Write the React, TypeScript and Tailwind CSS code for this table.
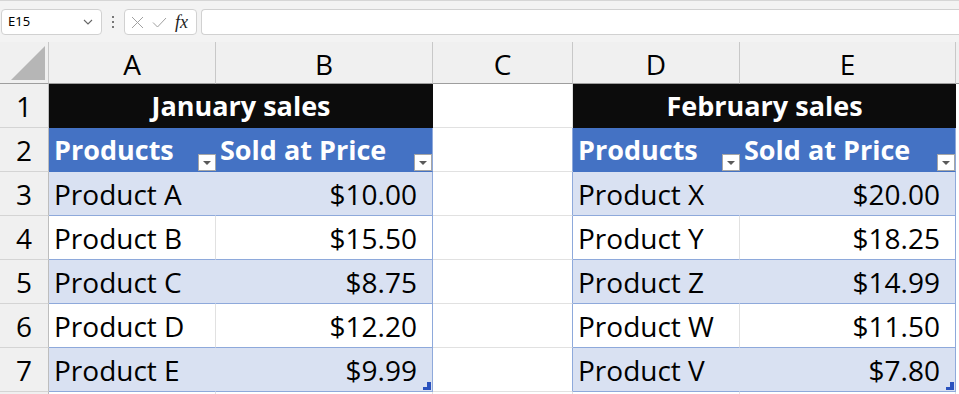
import React from 'react';

const font = { fontFamily: '"Open Sans", "Liberation Sans", Arial, sans-serif' };

type Row = { name: string; price: string };

const jan: Row[] = [
  { name: 'Product A', price: '$10.00' },
  { name: 'Product B', price: '$15.50' },
  { name: 'Product C', price: '$8.75' },
  { name: 'Product D', price: '$12.20' },
  { name: 'Product E', price: '$9.99' },
];

const feb: Row[] = [
  { name: 'Product X', price: '$20.00' },
  { name: 'Product Y', price: '$18.25' },
  { name: 'Product Z', price: '$14.99' },
  { name: 'Product W', price: '$11.50' },
  { name: 'Product V', price: '$7.80' },
];

const FilterButton = () => (
  <div className="absolute right-0 bottom-0 w-[18px] h-[17px] bg-white border border-[#a6a6a6] flex items-center justify-center pt-[2px]">
    <svg width="8" height="5" viewBox="0 0 8 5">
      <polygon points="0,0 8,0 4,4" fill="#5a5a5a" />
    </svg>
  </div>
);

const ResizeHandle = () => (
  <svg className="absolute right-[1px] bottom-[1px]" width="8" height="8" viewBox="0 0 8 8">
    <polygon points="8,0 8,8 0,8 0,5 4,5 4,0" fill="#2a52be" />
  </svg>
);

const RowHead = ({ n }: { n?: number }) => (
  <div className="bg-[#f0f0f0] border-r border-b border-r-[#bdbdbd] border-b-[#d4d4d4] flex items-center justify-center text-[28px] text-black">
    {n}
  </div>
);

const ColHead = ({ label }: { label: string }) => (
  <div className="bg-[#f0f0f0] border-r border-b border-r-[#c8c8c8] border-b-[#9e9e9e] flex items-center justify-center pt-[2px] text-[28px] text-black">
    {label}
  </div>
);

const Gap = ({ first }: { first?: boolean }) => (
  <div className={`bg-white border-b border-r border-b-[#e1e1e1] ${first ? 'border-r-[#e1e1e1]' : 'border-r-[#8ea9db]'}`} />
);

const TableCells = ({ rows, i, last }: { rows: Row[]; i: number; last: boolean }) => {
  const r = rows[i];
  const band = i % 2 === 0;
  return (
    <>
      <div
        className={`flex items-center pl-[5px] text-[28px] text-black border-b border-r border-b-[#8ea9db] ${
          band ? 'bg-[#d9e1f2] border-r-[#d9e1f2]' : 'bg-white border-r-[#e1e1e1]'
        }`}
      >
        {r.name}
      </div>
      <div
        className={`relative flex items-center justify-end pr-[15px] text-[28px] text-black border-b border-r border-b-[#8ea9db] border-r-[#8ea9db] ${
          band ? 'bg-[#d9e1f2]' : 'bg-white'
        }`}
      >
        {r.price}
        {last && <ResizeHandle />}
      </div>
    </>
  );
};

export default function App() {
  return (
    <div className="w-[959px] h-[394px] overflow-hidden bg-white" style={font}>
      {/* Formula bar */}
      <div className="h-[42px] bg-[#f3f3f3] border-t border-[#d6d6d6] flex items-start pt-[8px] pl-[1px]">
        <div className="w-[101px] h-[26px] bg-white border border-[#d1d1d1] rounded-[4px] flex items-center justify-between pl-[6px] pr-[8px]">
          <span className="text-[13px] text-black" style={{ fontFamily: '"Noto Sans", sans-serif' }}>E15</span>
          <svg width="10" height="6" viewBox="0 0 10 6">
            <polyline points="1,1 5,5 9,1" fill="none" stroke="#666" strokeWidth="1.1" />
          </svg>
        </div>
        <div className="w-[22px] h-[26px] flex flex-col items-center justify-center gap-[3px]">
          <div className="w-[2px] h-[2px] bg-[#777]" />
          <div className="w-[2px] h-[2px] bg-[#777]" />
          <div className="w-[2px] h-[2px] bg-[#777]" />
        </div>
        <div className="w-[73px] h-[26px] bg-white border border-[#d1d1d1] rounded-[4px] flex items-center pl-[6px] gap-[8px]">
          <svg width="13" height="13" viewBox="0 0 13 13">
            <path d="M1 1 L12 12 M12 1 L1 12" stroke="#a0a0a0" strokeWidth="1" />
          </svg>
          <svg width="15" height="11" viewBox="0 0 15 11">
            <polyline points="1,5.5 5.5,10 14,1" fill="none" stroke="#a0a0a0" strokeWidth="1" />
          </svg>
          <span
            className="text-[18px] italic text-[#222] leading-none"
            style={{ fontFamily: '"Liberation Serif", "Times New Roman", serif' }}
          >
            fx
          </span>
        </div>
        <div className="ml-[4px] flex-1 h-[26px] bg-white border border-[#d1d1d1] rounded-l-[4px] border-r-0" />
      </div>

      {/* Sheet grid */}
      <div className="grid grid-cols-[49px_167px_217px_140px_167px_216px_1fr] grid-rows-[42px_repeat(8,44px)]">
        {/* column headers */}
        <div className="bg-[#f0f0f0] border-r border-b border-r-[#c8c8c8] border-b-[#9e9e9e] relative">
          <svg className="absolute right-[3px] bottom-[3px]" width="34" height="34" viewBox="0 0 34 34">
            <polygon points="34,0 34,34 0,34" fill="#b6b6b6" />
          </svg>
        </div>
        <ColHead label="A" />
        <ColHead label="B" />
        <ColHead label="C" />
        <ColHead label="D" />
        <ColHead label="E" />
        <div className="bg-[#f0f0f0] border-b border-b-[#9e9e9e]" />

        {/* row 1 */}
        <RowHead n={1} />
        <div className="col-span-2 bg-[#0c0c0c] flex items-center justify-center text-white font-bold text-[27px]">
          January sales
        </div>
        <div className="bg-white border-b border-r border-[#e1e1e1]" />
        <div className="col-span-2 bg-[#0c0c0c] flex items-center justify-center text-white font-bold text-[27px]">
          February sales
        </div>
        <div className="bg-white" />

        {/* row 2 */}
        <RowHead n={2} />
        <div className="relative bg-[#4472c4] border-b border-b-[#4472c4] flex items-center pl-[5px] pt-[2px] text-white font-bold text-[27px]">
          Products
          <FilterButton />
        </div>
        <div className="relative bg-[#4472c4] border-b border-b-[#4472c4] border-r border-r-[#8ea9db] flex items-center pl-[4px] pt-[2px] text-white font-bold text-[27px]">
          Sold at Price
          <FilterButton />
        </div>
        <Gap />
        <div className="relative bg-[#4472c4] border-b border-b-[#4472c4] flex items-center pl-[5px] pt-[2px] text-white font-bold text-[27px]">
          Products
          <FilterButton />
        </div>
        <div className="relative bg-[#4472c4] border-b border-b-[#4472c4] border-r border-r-[#8ea9db] flex items-center pl-[4px] pt-[2px] text-white font-bold text-[27px]">
          Sold at Price
          <FilterButton />
        </div>
        <div className="bg-white" />

        {/* rows 3-7 */}
        {jan.map((_, i) => (
          <React.Fragment key={i}>
            <RowHead n={i + 3} />
            <TableCells rows={jan} i={i} last={i === jan.length - 1} />
            <Gap />
            <TableCells rows={feb} i={i} last={i === feb.length - 1} />
            <div className="bg-white" />
          </React.Fragment>
        ))}

        {/* row 8 (cut off by the window) */}
        <RowHead />
        <div className="bg-white border-r border-[#e1e1e1]" />
        <div className="bg-white border-r border-[#e1e1e1]" />
        <div className="bg-white border-r border-[#e1e1e1]" />
        <div className="bg-white border-r border-[#e1e1e1]" />
        <div className="bg-white border-r border-[#e1e1e1]" />
        <div className="bg-white" />
      </div>
    </div>
  );
}
